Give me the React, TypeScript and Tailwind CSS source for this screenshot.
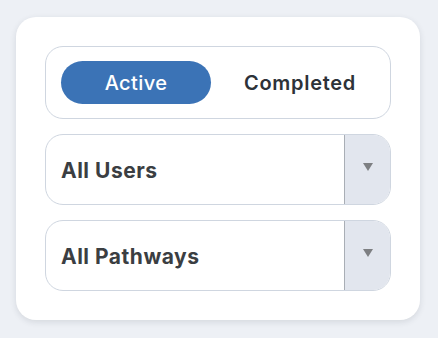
import React, { useState } from "react";

const font = { fontFamily: "Inter, 'Noto Sans', sans-serif" };

function Select({ label }: { label: string }) {
  return (
    <div className="flex h-[71px] overflow-hidden rounded-[18px] border border-[#cfd6e0] bg-white">
      <div className="flex flex-1 items-center pl-[15px] pt-[2px] text-[21px] font-bold tracking-[0.5px] text-[#3b3e42]">
        {label}
      </div>
      <div className="flex w-[46px] items-center justify-center border-l border-[#a9aeb5] bg-[#e2e6ee]">
        <svg width="10" height="8" viewBox="0 0 10 8" className="mt-[-6px]">
          <path d="M0 0 H10 L5 8 Z" fill="#7d7f82" />
        </svg>
      </div>
    </div>
  );
}

export default function App() {
  const [tab, setTab] = useState<"active" | "completed">("active");

  return (
    <div className="min-h-screen bg-[#edf0f5] pl-4 pt-[17px]" style={font}>
      <div className="flex w-[404px] flex-col gap-[15px] rounded-[20px] bg-white p-[29px] shadow-[0_2px_6px_rgba(30,41,59,0.12)]">
        <div className="flex h-[73px] items-center justify-between rounded-[18px] border border-[#cfd6e0] px-[15px]">
          {(["active", "completed"] as const).map((key) => (
            <button
              key={key}
              type="button"
              onClick={() => setTab(key)}
              className={
                tab === key
                  ? "flex h-[43px] w-[150px] items-center justify-center rounded-full bg-[#3b73b6] text-[20px] font-medium tracking-[0.4px] text-white"
                  : "flex h-[43px] w-[150px] items-center justify-center rounded-full text-[20px] font-semibold tracking-[0.7px] text-[#2d3238]"
              }
            >
              {key === "active" ? "Active" : "Completed"}
            </button>
          ))}
        </div>
        <Select label="All Users" />
        <Select label="All Pathways" />
      </div>
    </div>
  );
}
